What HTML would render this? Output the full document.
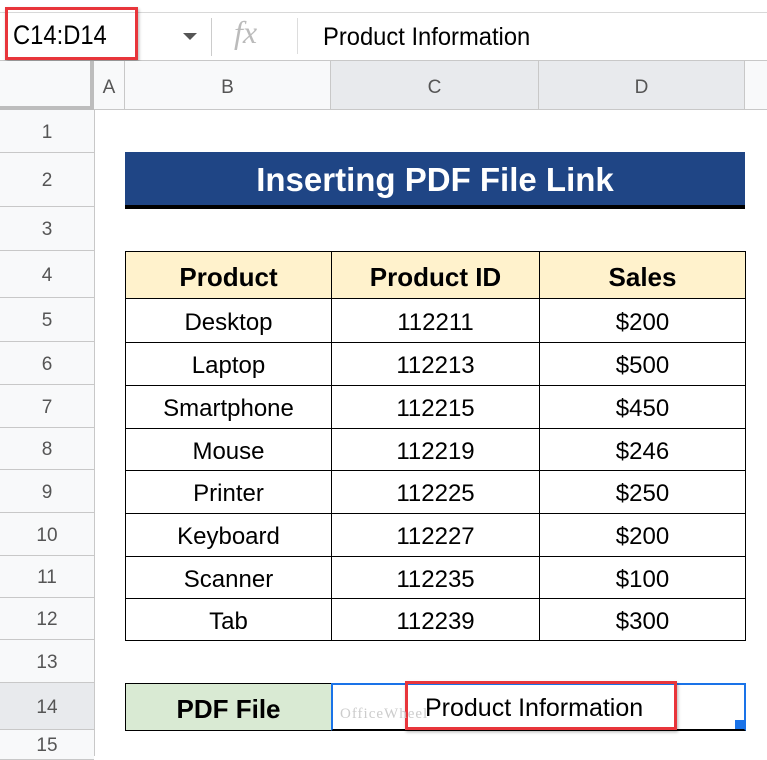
<!DOCTYPE html>
<html><head><meta charset="utf-8"><style>
*{margin:0;padding:0;box-sizing:border-box}
body{width:767px;height:756px;overflow:hidden;background:#fff;font-family:"Liberation Sans",Arial,sans-serif;position:relative}
.a{position:absolute}
.rh{position:absolute;left:0;width:94px;background:#f8f9fa;border-bottom:1px solid #c8c8c8;color:#555;font-size:19px;text-align:center;display:flex;align-items:center;justify-content:center;padding-top:3px}
.ch{position:absolute;top:61px;height:49px;background:#f8f9fa;border-right:1px solid #c8c8c8;color:#555;font-size:19px;display:flex;align-items:center;justify-content:center;padding-top:4px}
.c{position:absolute;display:flex;align-items:center;justify-content:center;font-size:24px;color:#000;border:1px solid #000;padding-top:4px}
</style></head><body>
<div class="a" style="left:0;top:12px;width:767px;height:49px;border-top:1px solid #d8d8d8;border-bottom:1px solid #c8c8c8"></div>
<div class="a" style="left:5px;top:7px;width:133px;height:53px;border:3px solid #e8353b;box-shadow:1px 2px 3px rgba(0,0,0,.3)"></div>
<div class="a" style="left:13px;top:20px;font-size:27px;color:#000;transform:scaleX(.88);transform-origin:left">C14:D14</div>
<div class="a" style="left:183px;top:33px;width:0;height:0;border-left:7px solid transparent;border-right:7px solid transparent;border-top:7px solid #555"></div>
<div class="a" style="left:211px;top:18px;width:1px;height:38px;background:#ccc"></div>
<div class="a" style="left:234px;top:14px;font-size:32px;color:#bbb;font-family:'Liberation Serif',serif;font-style:italic">fx</div>
<div class="a" style="left:297px;top:18px;width:1px;height:36px;background:#ddd"></div>
<div class="a" style="left:323px;top:23px;font-size:25px;color:#000;transform:scaleX(.95);transform-origin:left">Product Information</div>
<div class="a" style="left:0;top:61px;width:94px;height:49px;background:#f8f9fa;border-right:4px solid #bdbdbd;border-bottom:4px solid #bdbdbd"></div>
<div class="ch" style="left:94px;width:31px">A</div>
<div class="ch" style="left:125px;width:206px">B</div>
<div class="ch" style="left:331px;width:208px;background:#e8eaed">C</div>
<div class="ch" style="left:539px;width:206px;background:#e8eaed">D</div>
<div class="ch" style="left:745px;width:30px"></div>
<div class="a" style="left:94px;top:109px;width:673px;height:1px;background:#c8c8c8"></div>
<div class="a" style="left:94px;top:110px;width:1px;height:646px;background:#c8c8c8"></div>
<div class="rh" style="top:110px;height:43px">1</div>
<div class="rh" style="top:153px;height:54px">2</div>
<div class="rh" style="top:207px;height:44px">3</div>
<div class="rh" style="top:251px;height:47px">4</div>
<div class="rh" style="top:298px;height:44px">5</div>
<div class="rh" style="top:342px;height:43px">6</div>
<div class="rh" style="top:385px;height:43px">7</div>
<div class="rh" style="top:428px;height:42px">8</div>
<div class="rh" style="top:470px;height:43px">9</div>
<div class="rh" style="top:513px;height:43px">10</div>
<div class="rh" style="top:556px;height:42px">11</div>
<div class="rh" style="top:598px;height:42px">12</div>
<div class="rh" style="top:640px;height:43px">13</div>
<div class="rh" style="top:683px;height:47px;background:#e8eaed">14</div>
<div class="rh" style="top:730px;height:30px">15</div>
<div class="a" style="left:125px;top:152px;width:620px;height:57px;background:#1f4585;border-bottom:4px solid #000;color:#fff;font-weight:bold;font-size:33px;display:flex;align-items:center;justify-content:center;padding-top:3px">Inserting PDF File Link</div>
<div class="c" style="left:125px;top:251px;width:207px;height:48px;background:#fff2cc;font-weight:bold;font-size:26px">Product</div>
<div class="c" style="left:331px;top:251px;width:209px;height:48px;background:#fff2cc;font-weight:bold;font-size:26px">Product ID</div>
<div class="c" style="left:539px;top:251px;width:207px;height:48px;background:#fff2cc;font-weight:bold;font-size:26px">Sales</div>
<div id="t"></div>
<script>
var d=[["Desktop","112211","$200"],["Laptop","112213","$500"],["Smartphone","112215","$450"],["Mouse","112219","$246"],["Printer","112225","$250"],["Keyboard","112227","$200"],["Scanner","112235","$100"],["Tab","112239","$300"]];
var ys=[298,342,385,428,470,513,556,598,640];var h="";
for(var i=0;i<8;i++){var y=ys[i],hh=ys[i+1]-y+1;
h+='<div class="c" style="left:125px;top:'+y+'px;width:207px;height:'+hh+'px">'+d[i][0]+'</div>';
h+='<div class="c" style="left:331px;top:'+y+'px;width:209px;height:'+hh+'px">'+d[i][1]+'</div>';
h+='<div class="c" style="left:539px;top:'+y+'px;width:207px;height:'+hh+'px">'+d[i][2]+'</div>';}
document.getElementById("t").innerHTML=h;
</script>
<div class="c" style="left:125px;top:683px;width:207px;height:48px;background:#d9ead3;font-weight:bold;font-size:26px">PDF File</div>
<div class="a" style="left:331px;top:683px;width:415px;height:48px;border:2px solid #1a73e8;border-bottom:2px solid #000"></div>
<div class="a" style="left:735px;top:720px;width:9px;height:9px;background:#1a73e8"></div>
<div class="a" style="left:405px;top:681px;width:272px;height:49px;border:3px solid #e8353b;box-shadow:1px 2px 3px rgba(0,0,0,.3)"></div>
<div class="a" style="left:425px;top:694px;font-size:25px;color:#000">Product Information</div>
<div class="a" style="left:340px;top:706px;font-size:15px;color:#ccc;font-family:'Liberation Serif',serif;letter-spacing:1px">OfficeWheel</div>
</body></html>
